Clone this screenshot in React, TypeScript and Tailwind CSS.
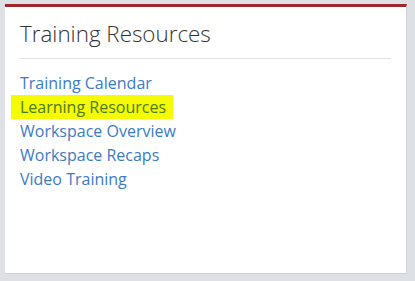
export default function App() {
  const links = [
    "Training Calendar",
    "Learning Resources",
    "Workspace Overview",
    "Workspace Recaps",
    "Video Training",
  ];

  return (
    <div className="h-[281px] w-[415px] bg-[#dde0e4] pt-1 pl-[5px] pr-[8px] pb-[6px]" style={{ fontFamily: '"Open Sans", sans-serif' }}>
      <div className="h-[270px] w-[402px] border-t-[3px] border-t-[#a1272d] border-b border-r border-b-[#cfd2d6] border-r-[#cfd2d6] bg-white px-[15px]">
        <h2 className="pt-[12px] pb-[9px] text-[22.4px] leading-[30px] font-light text-[#333]">
          Training Resources
        </h2>
        <div className="h-px bg-[#e0e0e0]" />
        <ul className="mt-[12px] flex flex-col">
          {links.map((link, i) => (
            <li key={i} className="text-[16px] leading-6">
              {i === 1 ? (
                <span className="-ml-[9px] bg-[#f5fb00] pl-[9px] pr-[7px] py-[1px] text-[#4d7a22]">
                  {link}
                </span>
              ) : (
                <span className="text-[#3b7bc4]">{link}</span>
              )}
            </li>
          ))}
        </ul>
      </div>
    </div>
  );
}
